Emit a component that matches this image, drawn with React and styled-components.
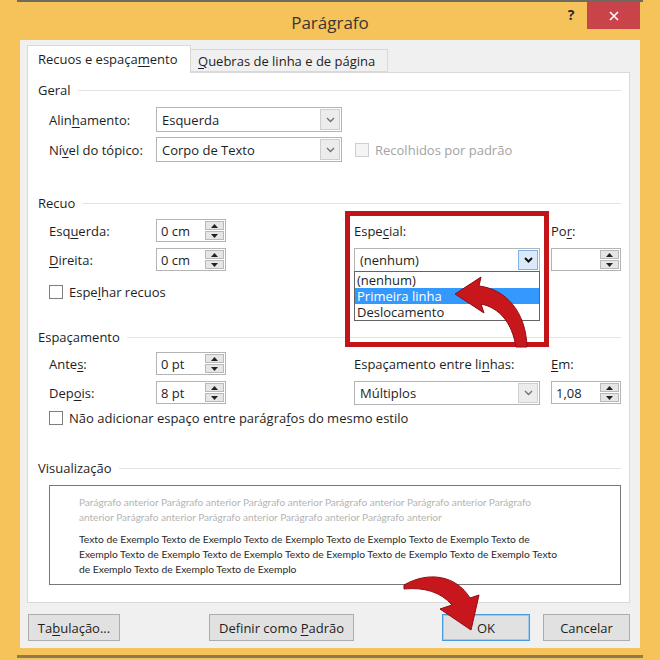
import styled, { createGlobalStyle } from 'styled-components'

const GlobalStyle = createGlobalStyle`
    html, body {
        margin: 0;
        padding: 0;
        background: #f6c35b;
    }
    * {
        box-sizing: border-box;
    }
`

const Page = styled.div`
    position: relative;
    width: 660px;
    height: 660px;
    padding: 0 17px;
    background: #f6c35b;
    overflow: hidden;
    font-family: "Open Sans", "Noto Sans", sans-serif;
    font-size: 13px;
    color: #1e1e1e;
`

const Window = styled.div`
    height: 658px;
    border-top: 2px solid #6f6a5e;
    border-bottom: 3px solid #8c7b4e;
    display: flex;
    flex-direction: column;
`

const TitleBar = styled.div`
    height: 38px;
    padding: 0 3px;
    display: grid;
    grid-template-columns: 1fr auto 1fr;
    align-items: center;
`

const Title = styled.span`
    grid-column: 2;
    font-size: 17px;
    color: #3a3530;
    margin-top: 2px;
`

const WindowControls = styled.div`
    grid-column: 3;
    justify-self: end;
    align-self: start;
    display: flex;
`

const HelpButton = styled.div`
    width: 32px;
    height: 25px;
    display: flex;
    align-items: center;
    justify-content: center;
    font-weight: 700;
    font-size: 14px;
    color: #2a2a2a;
`

const CloseButton = styled.div`
    width: 53px;
    height: 27px;
    background: #c9434b;
    display: flex;
    align-items: center;
    justify-content: center;
`

const Body = styled.div`
    margin: 0 3px;
    height: 608px;
    background: #f0f0f0;
    padding: 5px 10px 0 7px;
`

const TabRow = styled.div`
    display: flex;
    align-items: flex-end;
    height: 27px;
`

const Tab = styled.div`
    position: relative;
    z-index: 1;
    display: flex;
    align-items: center;
    height: ${p => p.$active ? '28px' : '23px'};
    margin-bottom: ${p => p.$active ? '-1px' : '0'};
    padding: ${p => p.$active ? '0 10px 1px' : '0 7px'};
    width: ${p => p.$width}px;
    background: ${p => p.$active ? '#fff' : '#f0f0f0'};
    border: 1px solid #d9d9d9;
    border-bottom: ${p => p.$active ? 'none' : '1px solid #d9d9d9'};
    border-left: ${p => p.$active ? '1px solid #d9d9d9' : 'none'};
`

const Panel = styled.div`
    height: 531px;
    background: #fff;
    border: 1px solid #d9d9d9;
    padding: 0 8px 0 10px;
`

const SectionTitle = styled.div`
    display: flex;
    align-items: center;
    gap: 7px;
    height: 16px;
    margin-top: ${p => p.$top}px;

    &::after {
        content: '';
        flex: 1;
        height: 1px;
        background: #e3e3e3;
    }
`

const FieldGrid = styled.div`
    display: grid;
    grid-template-columns: 107px 198px 197px 70px;
    grid-auto-rows: ${p => p.$row}px;
    row-gap: ${p => p.$gap}px;
    margin: ${p => p.$top}px 0 0 11px;
    align-items: center;
`

const Label = styled.span`
    white-space: nowrap;
    color: ${p => p.$disabled ? '#a3a3a3' : 'inherit'};
`

const Key = styled.u`
    text-underline-offset: 2px;
`

const SelectBox = styled.div`
    position: relative;
    display: flex;
    align-items: stretch;
    width: 186px;
    height: ${p => p.$height || 25}px;
    border: 1px solid #b4b4b4;
    background: #fff;
`

const SelectValue = styled.span`
    flex: 1;
    display: flex;
    align-items: center;
    padding-left: 5px;
`

const DropButton = styled.div`
    width: 20px;
    margin: 1px;
    display: flex;
    align-items: center;
    justify-content: center;
    background: ${p => p.$open ? '#dbeafb' : '#ececec'};
    border: 1px solid ${p => p.$open ? '#7db3e8' : '#cfcfcf'};
`

const DropList = styled.div`
    position: absolute;
    top: 100%;
    left: -1px;
    right: -1px;
    z-index: 5;
    background: #fff;
    border: 1px solid #646464;
`

const DropItem = styled.div`
    height: 16px;
    line-height: 16px;
    padding-left: 2px;
    background: ${p => p.$selected ? '#3399ff' : 'transparent'};
    color: ${p => p.$selected ? '#fff' : 'inherit'};
`

const SpinBox = styled.div`
    display: flex;
    align-items: center;
    width: 70px;
    height: 23px;
    border: 1px solid #b4b4b4;
    background: #fff;
    padding-right: 1px;
`

const SpinValue = styled.span`
    flex: 1;
    padding-left: 4px;
`

const SpinButtons = styled.div`
    display: flex;
    flex-direction: column;
    width: 19px;
    height: 19px;
    gap: 1px;
`

const SpinButton = styled.div`
    flex: 1;
    display: flex;
    align-items: center;
    justify-content: center;
    background: #e6e6e6;
    border: 1px solid #b9b9b9;
`

const CheckRow = styled.div`
    display: flex;
    align-items: center;
    gap: 6px;
    height: 16px;
    margin: ${p => p.$top || 0}px 0 0 ${p => p.$left ?? 11}px;
`

const Box = styled.span`
    width: 14px;
    height: 14px;
    border: 1px solid ${p => p.$disabled ? '#cfcfcf' : '#7d7d7d'};
    background: ${p => p.$disabled ? '#f4f4f4' : '#fff'};
`

const Preview = styled.div`
    margin: 9px 0 0 11px;
    height: 100px;
    border: 1px solid #777;
    padding: 9px 0 0 29px;
    font-family: Lato, "Liberation Sans", sans-serif;
`

const PreviewPara = styled.div`
    color: ${p => p.$muted ? '#b4b4b4' : '#2a2a2a'};
    font-size: ${p => p.$muted ? '10.05px' : '10.3px'};
    margin-bottom: 7px;
`

const PreviewLine = styled.div`
    height: 15px;
    line-height: 15px;
    white-space: nowrap;
`

const ButtonBar = styled.div`
    display: flex;
    margin: 11px 0 0 1px;
`

const Button = styled.div`
    height: 27px;
    width: ${p => p.$width}px;
    margin-left: ${p => p.$gap || 0}px;
    display: flex;
    align-items: center;
    justify-content: center;
    background: #e1e1e1;
    border: 1px solid ${p => p.$primary ? '#4a9bdc' : '#adadad'};
    box-shadow: ${p => p.$primary ? 'inset 0 0 0 1px #9ccbef' : 'none'};
`

const Overlay = styled.svg`
    position: absolute;
    left: 0;
    top: 0;
    z-index: 10;
    pointer-events: none;
`

const Chevron = ({ dark }) => (
    <svg width="9" height="6" viewBox="0 0 9 6">
        <polyline points="1,1 4.5,4.5 8,1" fill="none"
            stroke={dark ? '#111' : '#707070'} strokeWidth={dark ? 2 : 1.3} />
    </svg>
)

const Select = ({ value, open, height, children }) => (
    <SelectBox $height={height}>
        <SelectValue>{value}</SelectValue>
        <DropButton $open={open}><Chevron dark={open} /></DropButton>
        {children}
    </SelectBox>
)

const Spinner = ({ value }) => (
    <SpinBox>
        <SpinValue>{value}</SpinValue>
        <SpinButtons>
            <SpinButton>
                <svg width="7" height="4" viewBox="0 0 7 4"><polygon points="0,4 3.5,0 7,4" fill="#222" /></svg>
            </SpinButton>
            <SpinButton>
                <svg width="7" height="4" viewBox="0 0 7 4"><polygon points="0,0 3.5,4 7,0" fill="#222" /></svg>
            </SpinButton>
        </SpinButtons>
    </SpinBox>
)

const Check = ({ disabled, left, top, children }) => (
    <CheckRow $left={left} $top={top}>
        <Box $disabled={disabled} />
        <Label $disabled={disabled}>{children}</Label>
    </CheckRow>
)

const muted = [
    'Parágrafo anterior Parágrafo anterior Parágrafo anterior Parágrafo anterior Parágrafo anterior Parágrafo',
    'anterior Parágrafo anterior Parágrafo anterior Parágrafo anterior Parágrafo anterior',
]

const sample = [
    'Texto de Exemplo Texto de Exemplo Texto de Exemplo Texto de Exemplo Texto de Exemplo Texto de',
    'Exemplo Texto de Exemplo Texto de Exemplo Texto de Exemplo Texto de Exemplo Texto de Exemplo Texto',
    'de Exemplo Texto de Exemplo Texto de Exemplo',
]

export default function App() {
    return (
        <Page>
            <GlobalStyle />
            <Window>
                <TitleBar>
                    <Title>Parágrafo</Title>
                    <WindowControls>
                        <HelpButton>?</HelpButton>
                        <CloseButton>
                            <svg width="10" height="10" viewBox="0 0 10 10">
                                <path d="M1 1L9 9M9 1L1 9" stroke="#fff" strokeWidth="1.6" />
                            </svg>
                        </CloseButton>
                    </WindowControls>
                </TitleBar>
                <Body>
                    <TabRow>
                        <Tab $active $width={164}><span>Recuos e espaça<Key>m</Key>ento</span></Tab>
                        <Tab $width={197}><span><Key>Q</Key>uebras de linha e de página</span></Tab>
                    </TabRow>
                    <Panel>
                        <SectionTitle $top={9}>Geral</SectionTitle>
                        <FieldGrid $top={9} $row={25} $gap={5}>
                            <Label>Alin<Key>h</Key>amento:</Label>
                            <Select value="Esquerda" />
                            <span />
                            <span />
                            <Label>Ní<Key>v</Key>el do tópico:</Label>
                            <Select value="Corpo de Texto" />
                            <Check disabled left={1}>Recolhidos por padrão</Check>
                            <span />
                        </FieldGrid>

                        <SectionTitle $top={33}>Recuo</SectionTitle>
                        <FieldGrid $top={8} $row={23} $gap={6}>
                            <Label>Esq<Key>u</Key>erda:</Label>
                            <Spinner value="0 cm" />
                            <Label>Espe<Key>c</Key>ial:</Label>
                            <Label>Po<Key>r</Key>:</Label>
                            <Label><Key>D</Key>ireita:</Label>
                            <Spinner value="0 cm" />
                            <Select value="(nenhum)" open height={24}>
                                <DropList>
                                    <DropItem>(nenhum)</DropItem>
                                    <DropItem $selected>Primeira linha</DropItem>
                                    <DropItem>Deslocamento</DropItem>
                                </DropList>
                            </Select>
                            <Spinner value="" />
                        </FieldGrid>
                        <Check top={13}>Espe<Key>l</Key>har recuos</Check>

                        <SectionTitle $top={29}>Espaçamento</SectionTitle>
                        <FieldGrid $top={7} $row={23} $gap={6}>
                            <Label>Ante<Key>s</Key>:</Label>
                            <Spinner value="0 pt" />
                            <Label>Espaçamento entre li<Key>n</Key>has:</Label>
                            <Label><Key>E</Key>m:</Label>
                            <Label>Dep<Key>o</Key>is:</Label>
                            <Spinner value="8 pt" />
                            <Select value="Múltiplos" height={24} />
                            <Spinner value="1,08" />
                        </FieldGrid>
                        <Check top={6}>Não adicionar espaço entre parágra<Key>f</Key>os do mesmo estilo</Check>

                        <SectionTitle $top={34}>Visualização</SectionTitle>
                        <Preview>
                            <PreviewPara $muted>
                                {muted.map((l, i) => <PreviewLine key={i}>{l}</PreviewLine>)}
                            </PreviewPara>
                            <PreviewPara>
                                {sample.map((l, i) => <PreviewLine key={i}>{l}</PreviewLine>)}
                            </PreviewPara>
                        </Preview>
                    </Panel>
                    <ButtonBar>
                        <Button $width={92}><span>Ta<Key>b</Key>ulação...</span></Button>
                        <Button $width={145} $gap={89}><span>Definir como <Key>P</Key>adrão</span></Button>
                        <Button $width={88} $gap={88} $primary>OK</Button>
                        <Button $width={87} $gap={13}>Cancelar</Button>
                    </ButtonBar>
                </Body>
            </Window>

            <Overlay width="660" height="660" viewBox="0 0 660 660">
                <rect x="347.5" y="213.5" width="199" height="131" fill="none" stroke="#c3141c" strokeWidth="5" />
                <path d="M455 294 L481 277 L479 286 C505 289 526 311 527 347 L516 347 C512 323 500 308 481 304 L484 313 Z"
                    fill="#c8161d" stroke="#8e0d12" strokeWidth="1" />
                <path d="M404 585 C428 571 456 575 470 598 L479 595 L471 630 L440 609 L452 605 C441 592 424 587 404 589 Z"
                    fill="#c8161d" stroke="#8e0d12" strokeWidth="1" />
            </Overlay>
        </Page>
    )
}
